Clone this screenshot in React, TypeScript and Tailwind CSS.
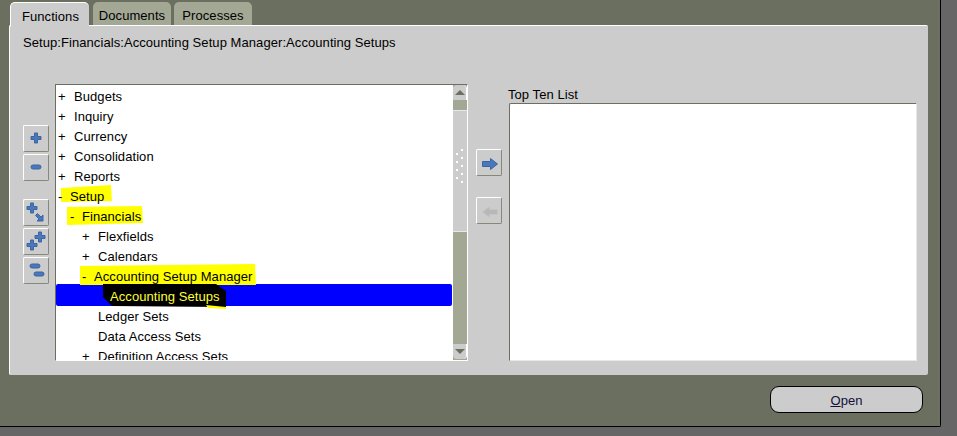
const treeRows = [
  { mark: '+', markLeft: 2, textLeft: 18, label: 'Budgets' },
  { mark: '+', markLeft: 2, textLeft: 18, label: 'Inquiry' },
  { mark: '+', markLeft: 2, textLeft: 18, label: 'Currency' },
  { mark: '+', markLeft: 2, textLeft: 18, label: 'Consolidation' },
  { mark: '+', markLeft: 2, textLeft: 18, label: 'Reports' },
  { mark: '-', markLeft: 2, textLeft: 14, label: 'Setup' },
  { mark: '-', markLeft: 14, textLeft: 26, label: 'Financials' },
  { mark: '+', markLeft: 26, textLeft: 42, label: 'Flexfields' },
  { mark: '+', markLeft: 26, textLeft: 42, label: 'Calendars' },
  { mark: '-', markLeft: 26, textLeft: 38, label: 'Accounting Setup Manager' },
  { mark: '', markLeft: 0, textLeft: 54, label: 'Accounting Setups', selected: true },
  { mark: '', markLeft: 0, textLeft: 42, label: 'Ledger Sets' },
  { mark: '', markLeft: 0, textLeft: 42, label: 'Data Access Sets' },
  { mark: '+', markLeft: 26, textLeft: 42, label: 'Definition Access Sets' },
];

const blue = '#4a78bd';
const blueDark = '#3c649f';

function Plus({ x, y }: { x: number; y: number }) {
  return (
    <path
      d={`M${x - 1.5} ${y - 5}h3v3.500h3.500v3h-3.500v3.500h-3v-3.500h-3.500v-3h3.500z`}
      fill={blue}
      stroke={blueDark}
      strokeWidth="1"
    />
  );
}

function Minus({ x, y }: { x: number; y: number }) {
  return <rect x={x - 5} y={y - 2} width="10" height="4" rx="2" fill={blue} stroke={blueDark} />;
}

function ToolButton({ children, className = '' }: { children: React.ReactNode; className?: string }) {
  return (
    <button className={`block w-[26px] h-[27px] shrink-0 rounded-[2px] border border-t-white border-l-white border-r-[#858a78] border-b-[#858a78] bg-[#cccccc] ${className}`}>
      <svg width="24" height="25" viewBox="0 0 24 25" className="block">
        {children}
      </svg>
    </button>
  );
}

function ScrollBar() {
  return (
    <div className="w-[15px] shrink-0 h-full flex flex-col bg-[#a3a895] border-l border-[#ffffff]">
      <div className="h-[15px] bg-[#cccccc] rounded-t-[4px] border-r border-white flex items-center justify-center">
        <div className="w-0 h-0 border-x-[5px] border-x-transparent border-b-[5px] border-b-[#6a6f5f]" />
      </div>
      <div className="h-[10px]" />
      <div className="h-[122px] bg-[#cccccc] border-y border-[#e8e8e8] pb-[8px] flex items-center justify-center">
        <svg width="11" height="36" viewBox="0 0 11 36" className="block -translate-x-[1px]" fill="#ffffff">
          <rect x="7" y="0" width="2" height="2" />
          <rect x="2" y="4" width="2" height="2" />
          <rect x="7" y="8" width="2" height="2" />
          <rect x="2" y="12" width="2" height="2" />
          <rect x="7" y="16" width="2" height="2" />
          <rect x="2" y="20" width="2" height="2" />
          <rect x="7" y="24" width="2" height="2" />
          <rect x="2" y="28" width="2" height="2" />
          <rect x="7" y="32" width="2" height="2" />
        </svg>
      </div>
      <div className="flex-1" />
      <div className="h-[15px] mb-[1px] bg-[#cccccc] rounded-b-[4px] border-r border-white flex items-center justify-center">
        <div className="w-0 h-0 border-x-[5px] border-x-transparent border-t-[5px] border-t-[#6a6f5f]" />
      </div>
    </div>
  );
}

function Tree() {
  return (
    <div className="relative w-[413px] h-[277px] shrink-0 flex bg-white border-t border-l border-t-[#6a6f5f] border-l-[#6a6f5f] border-r border-b border-r-white border-b-white overflow-hidden">
      <div className="relative flex-1 overflow-hidden pt-[2px]">
        {treeRows.map((row) => (
          <div
            key={row.label}
            className={
              row.selected
                ? 'relative h-[22px] -mt-[3px] mb-[1px] bg-[#0000ff] rounded-[2px] text-[#ffff33]'
                : 'relative h-[20px] text-black'
            }
          >
            {row.mark && (
              <span className="absolute z-10 top-0 leading-[20px]" style={{ left: row.markLeft }}>
                {row.mark}
              </span>
            )}
            <span
              className={
                row.selected
                  ? 'absolute z-10 top-[3px] leading-[20px] whitespace-nowrap'
                  : 'absolute z-10 leading-[20px] whitespace-nowrap'
              }
              style={{ left: row.textLeft }}
            >
              {row.label}
            </span>
          </div>
        ))}
        {/* marker scribbles over the tree */}
        <svg className="absolute left-0 top-0" width="397" height="275" viewBox="0 0 397 275">
          <polygon points="5,103 55,100 56,116 5,117" fill="#ffff00" />
          <polygon points="11,122 86,121 87,138 11,140" fill="#ffff00" />
          <polygon points="24,181 199,179 200,200 24,200" fill="#ffff00" />
          <polygon points="47,199 160,199 170,206 170,222 165,222 56,221 47,212" fill="#000000" />
          <polygon points="150,220 170,222 170,224 152,223" fill="#ffff00" />
        </svg>
      </div>
      <ScrollBar />
    </div>
  );
}

export default function App() {
  return (
    <div className="w-[957px] h-[436px] overflow-hidden bg-[#666666] font-['Liberation_Sans',Arial,sans-serif] text-[13px] tracking-[0.07px] text-black">
      <div className="w-[941px] h-[427px] bg-[#6a6f5f] border-r border-b border-black rounded-br-[2px] pl-[9px] pt-[2px] flex flex-col">
        <div className="flex h-[23px] pl-[1px]">
          <div className="w-[79px] bg-[#cccccc] border-t border-l border-white rounded-t-[5px] pl-[11px] leading-[27px] -mb-[1px] relative">
            Functions
          </div>
          <div className="w-[78px] ml-[4px] bg-[#a3a895] rounded-t-[5px] text-center leading-[27px]">Documents</div>
          <div className="w-[78px] ml-[3px] bg-[#a3a895] rounded-t-[5px] text-center leading-[27px]">Processes</div>
        </div>
        <div className="w-[919px] h-[350px] bg-[#cccccc] border-t border-l border-white rounded-[2px] pl-[13px] pt-[7px]">
          <div className="h-[20px] leading-[20px] whitespace-nowrap">
            Setup:Financials:Accounting Setup Manager:Accounting Setups
          </div>
          <div className="flex items-start mt-[31px]">
            <div className="w-[26px] shrink-0 pt-[41px] flex flex-col gap-[2px]">
              <ToolButton>
                <Plus x={12} y={12} />
              </ToolButton>
              <ToolButton>
                <Minus x={12} y={12} />
              </ToolButton>
              <ToolButton className="mt-[16px]">
                <Plus x={8} y={8} />
                <path d="M13.500 13.500l3.500 3.500 2-2v6h-6l2-2-3.500-3.500z" fill={blue} stroke={blueDark} />
              </ToolButton>
              <ToolButton>
                <Plus x={8} y={16} />
                <Plus x={16} y={8} />
              </ToolButton>
              <ToolButton>
                <Minus x={11} y={8} />
                <Minus x={15} y={16} />
              </ToolButton>
            </div>
            <div className="ml-[6px]">
              <Tree />
            </div>
            <div className="w-[26px] shrink-0 ml-[8px] pt-[65px] flex flex-col gap-[21px]">
              <ToolButton>
                <path d="M5.500 11.500h8v-3l7 5.500-7 5.500v-3h-8z" fill={blue} stroke={blueDark} />
              </ToolButton>
              <ToolButton>
                <path d="M20.500 11.500h-8v-3l-7 5.500 7 5.500v-3h8z" fill="#b8b8b8" stroke="#c4c4c4" />
              </ToolButton>
            </div>
            <div className="ml-[6px] w-[409px]">
              <div className="h-[19px] leading-[21px]">Top Ten List</div>
              <div className="ml-[1px] w-[408px] h-[258px] bg-white border-t border-l border-t-[#6a6f5f] border-l-[#6a6f5f] border-r border-b border-r-[#e8e8e8] border-b-[#e8e8e8] rounded-tl-[2px]" />
            </div>
          </div>
        </div>
        <div className="flex justify-end pr-[17px] mt-[11px]">
          <button className="w-[153px] h-[27px] pt-[2px] bg-[#cccccc] border border-black rounded-[9px] text-center text-[#10103a]">
            <span className="underline">O</span>pen
          </button>
        </div>
      </div>
    </div>
  );
}
